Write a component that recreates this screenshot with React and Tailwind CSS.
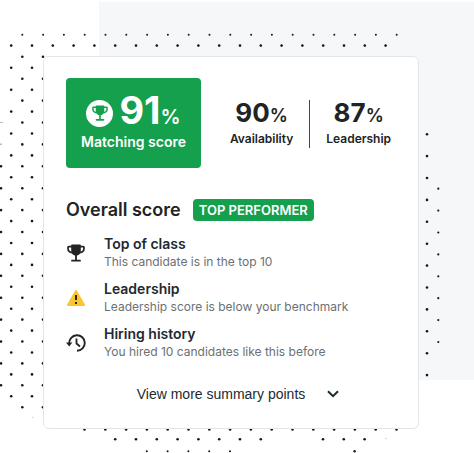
import React from 'react';

const DOT_X = 20.8;
const DOT_Y = 21.9;

// Each line of dots: start point, number of dots, direction and radius
const dotLines = [
  { x: 22.3, y: 34.7, count: 19, dir: 'row', r: 1 },
  { x: 11.2, y: 45.6, count: 19, dir: 'row', r: 1.3 },
  { x: 11.2, y: 67.8, count: 16, dir: 'col', r: 1.3 },
  { x: 32, y: 67.8, count: 16, dir: 'col', r: 1.3 },
  { x: 22.3, y: 56.8, count: 17, dir: 'col', r: 1.3 },
  { x: 43, y: 56.8, count: 17, dir: 'col', r: 1.3 },
  { x: 1, y: 166.3, count: 11, dir: 'col', r: 1.3 },
  { x: 427, y: 134.2, count: 12, dir: 'col', r: 1.3 },
  { x: 438.3, y: 188.7, count: 8, dir: 'col', r: 1.1 },
  { x: 84.5, y: 429.5, count: 16, dir: 'row', r: 1.3 },
  { x: 115.2, y: 439.3, count: 8, dir: 'row', r: 1.3 },
  { x: 323, y: 439.3, count: 3, dir: 'row', r: 1.3 },
  { x: 146.8, y: 451.3, count: 5, dir: 'row', r: 1 },
  { x: 354.6, y: 451.3, count: 1, dir: 'row', r: 1.2 },
];

const Dots = () => (
  <svg className="col-start-1 row-start-1" width="474" height="453" fill="#17181c" aria-hidden="true">
    {dotLines.map((line, i) =>
      Array.from({ length: line.count }, (_, n) => (
        <circle
          key={`${i}-${n}`}
          cx={line.x + (line.dir === 'row' ? n * DOT_X : 0)}
          cy={line.y + (line.dir === 'col' ? n * DOT_Y : 0)}
          r={line.r}
        />
      ))
    )}
    <g fill="#b9babd">
      <rect x="0" y="122" width="3" height="1" />
      <rect x="0" y="143.5" width="2" height="1.5" />
      <circle cx="32.7" cy="417.5" r="0.6" />
      <circle cx="386" cy="438.5" r="0.7" />
    </g>
  </svg>
);

const TrophyIcon = ({ className }) => (
  <svg className={className} viewBox="0 0 18 18" fill="none" stroke="currentColor" aria-hidden="true">
    <path d="M4.2 1.2Q4.2.5 5 .5h8q.8 0 .8.7V6.500c0 3-2 5.100-4.800 5.100S4.200 9.500 4.200 6.500z" fill="currentColor" stroke="none" />
    <path d="M5 2.600H1.700Q1 2.600 1 3.300V4.500C1 7 2.600 8.400 5.400 8.700M13 2.600h3.300q.7 0 .7.7V4.500C17 7 15.400 8.400 12.600 8.700" strokeWidth="1.700" />
    <path d="M9 10.500V16.500M5 16.700h8" strokeWidth="1.800" strokeLinecap="round" />
  </svg>
);

const WarningIcon = ({ className }) => (
  <svg className={className} viewBox="0 0 20 18" aria-hidden="true">
    <path d="M10 2 18 16H2z" fill="#fbc52d" stroke="#fbc52d" strokeWidth="2" strokeLinejoin="round" />
    <path d="M10 6v5M10 13v2" stroke="#26231a" strokeWidth="2" />
  </svg>
);

const HistoryIcon = ({ className }) => (
  <svg className={className} viewBox="0 0 20 18" fill="none" stroke="currentColor" aria-hidden="true">
    <path d="M3.200 9.500A7.800 7.800 0 1 1 11 16.800" strokeWidth="1.900" />
    <path d="M0 8.600h6.400L3.200 12.400z" fill="currentColor" stroke="none" />
    <path d="M10.500 4.500v5l3.500 3" strokeWidth="1.800" />
  </svg>
);

const Stat = ({ value, label }) => (
  <div className="text-center">
    <p className="text-[26px] leading-[26px] font-bold">
      {value}<span className="text-lg leading-[26px] font-semibold">%</span>
    </p>
    <p className="text-xs leading-5 font-semibold">{label}</p>
  </div>
);

const points = [
  { icon: TrophyIcon, title: 'Top of class', text: 'This candidate is in the top 10' },
  { icon: WarningIcon, title: 'Leadership', text: 'Leadership score is below your benchmark' },
  { icon: HistoryIcon, title: 'Hiring history', text: 'You hired 10 candidates like this before' },
];

const App = () => (
  <div className="grid overflow-hidden bg-white font-['Inter',sans-serif] text-[#222324]">
    <div className="col-start-1 row-start-1 mt-0.5 mb-[73px] ml-[99px] bg-[#f6f7f9]" />
    <Dots />

    <main className="z-10 col-start-1 row-start-1 mt-14 mr-[55px] mb-6 ml-[43px] rounded-md border border-[#e3e5e8] bg-white px-[22px] pt-[21px] pb-5">
      {/* Scores */}
      <div className="flex items-center">
        <div className="flex h-[90px] w-[135px] flex-col items-center justify-center rounded bg-[#14a04d] text-white">
          <div className="flex items-center gap-1.5">
            <span className="flex size-[27px] items-center justify-center rounded-full bg-white text-[#14a04d]">
              <TrophyIcon className="size-4" />
            </span>
            <p className="text-[38px] leading-[30px] font-bold">
              91<span className="text-xl leading-[30px] font-semibold">%</span>
            </p>
          </div>
          <p className="text-sm leading-5 font-semibold">Matching score</p>
        </div>
        <div className="flex flex-1 items-center justify-center gap-4 pt-0.5 pl-6">
          <Stat value="90" label="Availability" />
          <div className="h-12 w-px bg-[#444546]" />
          <Stat value="87" label="Leadership" />
        </div>
      </div>

      {/* Overall score */}
      <div className="mt-[30px] flex items-center gap-3">
        <h2 className="text-lg leading-6 font-semibold">Overall score</h2>
        <span className="rounded bg-[#14a04d] px-1.5 text-[13px] leading-[22px] font-semibold text-white">TOP PERFORMER</span>
      </div>

      <ul className="mt-[13px] space-y-[9px]">
        {points.map(({ icon: Icon, title, text }) => (
          <li key={title} className="flex items-center gap-[18px]">
            <Icon className="h-[18px] w-5" />
            <div>
              <h3 className="text-sm leading-[18px] font-semibold text-[#1d2a30]">{title}</h3>
              <p className="text-xs leading-[18px] text-[#6b7072]">{text}</p>
            </div>
          </li>
        ))}
      </ul>

      <div className="mt-[23px] flex justify-center pl-3.5">
        <button type="button" className="flex items-center gap-[22px] font-['Liberation_Sans',sans-serif] text-sm leading-5 text-[#1d2a30]">
          View more summary points
          <svg className="h-2 w-3" viewBox="0 0 12 8" fill="none" stroke="currentColor" strokeWidth="2" aria-hidden="true">
            <path d="M1 1.200 6 6.200 11 1.200" />
          </svg>
        </button>
      </div>
    </main>
  </div>
);

export default App;
